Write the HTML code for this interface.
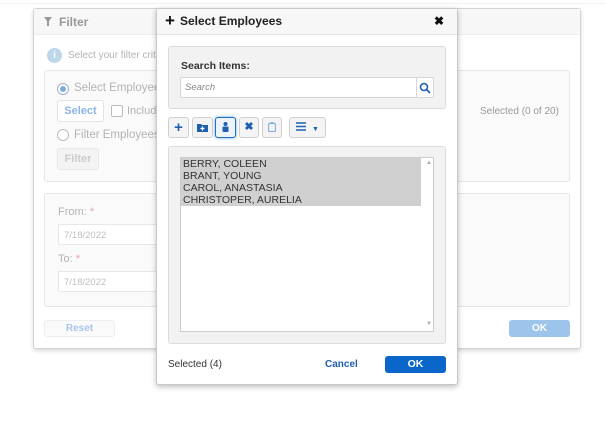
<!DOCTYPE html>
<html><head><style>
*{box-sizing:border-box;margin:0;padding:0}
body{width:605px;height:431px;background:#fff;font-family:"Liberation Sans",sans-serif;position:relative;overflow:hidden;font-size:11px}
.abs{position:absolute}
.back{left:33px;top:8px;width:548px;height:341px;border:1px solid #d4d4d4;border-radius:3px;background:#fff;box-shadow:0 2px 4px rgba(0,0,0,.15)}
.bhead{left:0;top:0;width:100%;height:26px;background:#f7f7f7;border-bottom:1px solid #eee;color:#999;font-weight:bold;font-size:12px}
.panel{border:1px solid #e6e6e6;border-radius:3px;background:#fafafa}
.g{color:#b3b3b3}
.front{left:156px;top:8px;width:302px;height:377px;border:1px solid #c8c8c8;border-radius:3px;background:#fff;box-shadow:0 2px 6px rgba(0,0,0,.25)}
.fp{border:1px solid #dcdcdc;border-radius:3px;background:#f2f2f2}
.tb{top:108px;height:21px;border:1px solid #d0d0d0;border-radius:3px;background:#f4f4f4;color:#1f5fb0;font-weight:bold;text-align:center;line-height:19px;font-size:12px}
.it{left:0;width:240px;height:12px;background:#d0d0d0;color:#333;font-size:10.5px;line-height:12px;padding-left:2px}
</style></head><body>
<div class="abs" style="left:0;top:3px;width:605px;height:1px;background:#f0f0f0"></div>
<div class="abs back">
 <div class="abs bhead"><svg class="abs" style="left:10px;top:8px" width="8" height="9" viewBox="0 0 8 9"><path d="M0 0h8L5 4v5H3V4z" fill="#999"/></svg><span class="abs" style="left:25px;top:6px">Filter</span></div>
 <div class="abs" style="left:13px;top:39px;width:15px;height:15px;border-radius:50%;background:#bcd6ea;color:#fff;font-size:10px;text-align:center;line-height:15px;font-weight:bold">i</div>
 <div class="abs g" style="left:34px;top:41px;font-size:10px">Select your filter criteria</div>
 <div class="abs panel" style="left:10px;top:61px;width:526px;height:112px"></div>
 <div class="abs" style="left:23px;top:74px;width:12px;height:12px;border-radius:50%;border:1px solid #aac;background:#fff"><div style="margin:2px;width:6px;height:6px;border-radius:50%;background:#7aaee0"></div></div>
 <div class="abs g" style="left:40px;top:73px;font-size:11.5px">Select Employees</div>
 <div class="abs" style="left:23px;top:91px;width:47px;height:22px;border:1px solid #e4e4e4;border-radius:3px;background:#fff;color:#8ab4e4;font-weight:bold;text-align:center;line-height:20px">Select</div>
 <div class="abs" style="left:77px;top:96px;width:12px;height:12px;border:1px solid #bbb;border-radius:2px;background:#fff"></div>
 <div class="abs g" style="left:93px;top:96px;font-size:11px">Include</div>
 <div class="abs" style="left:23px;top:120px;width:12px;height:12px;border-radius:50%;border:1px solid #bbb;background:#fff"></div>
 <div class="abs g" style="left:40px;top:120px;font-size:11.5px">Filter Employees</div>
 <div class="abs" style="left:23px;top:139px;width:42px;height:22px;border:1px solid #e8e8e8;border-radius:3px;background:#f4f4f4;color:#ccc;font-weight:bold;text-align:center;line-height:20px">Filter</div>
 <div class="abs" style="left:446px;top:97px;color:#999;font-size:10px">Selected (0 of 20)</div>
 <div class="abs panel" style="left:10px;top:184px;width:526px;height:114px"></div>
 <div class="abs g" style="left:24px;top:197px;font-size:11px">From: <span style="color:#f0a0a0">*</span></div>
 <div class="abs" style="left:24px;top:215px;width:110px;height:21px;border:1px solid #e8e8e8;background:#fff;color:#c0c0c0;font-size:9.5px;padding:5px 0 0 5px">7/18/2022</div>
 <div class="abs g" style="left:24px;top:244px;font-size:11px">To: <span style="color:#f0a0a0">*</span></div>
 <div class="abs" style="left:24px;top:262px;width:110px;height:21px;border:1px solid #e8e8e8;background:#fff;color:#c0c0c0;font-size:9.5px;padding:5px 0 0 5px">7/18/2022</div>
 <div class="abs" style="left:10px;top:311px;width:71px;height:17px;border:1px solid #eee;border-radius:3px;background:#fafafa;color:#a8c6ea;font-weight:bold;text-align:center;line-height:15px;font-size:10px">Reset</div>
 <div class="abs" style="left:475px;top:311px;width:61px;height:17px;border-radius:3px;background:#9dc4eb;color:#fff;font-weight:bold;text-align:center;line-height:17px;font-size:10px">OK</div>
</div>
<div class="abs front">
 <div class="abs" style="left:0;top:0;width:100%;height:26px;background:#f7f7f7;border-bottom:1px solid #e4e4e4"></div>
 <div class="abs" style="left:8px;top:2px;font-size:17px;font-weight:bold;color:#111">+</div>
 <div class="abs" style="left:23px;top:5px;font-size:12px;font-weight:bold;color:#222">Select Employees</div>
 <div class="abs" style="left:277px;top:5px;font-size:12px;font-weight:bold;color:#111">&#10006;</div>
 <div class="abs fp" style="left:11px;top:37px;width:278px;height:63px"></div>
 <div class="abs" style="left:24px;top:51px;font-size:10.5px;font-weight:bold;color:#333">Search Items:</div>
 <div class="abs" style="left:23px;top:68px;width:254px;height:21px;border:1px solid #d6d6d6;border-radius:2px;background:#fff"></div>
 <div class="abs" style="left:28px;top:73px;font-size:9.5px;font-style:italic;color:#888">Search</div>
 <div class="abs" style="left:259px;top:69px;width:1px;height:19px;background:#d6d6d6"></div>
 <svg class="abs" style="left:262px;top:73px" width="12" height="12" viewBox="0 0 12 12"><circle cx="5" cy="5" r="3.5" fill="none" stroke="#1f5fb0" stroke-width="1.6"/><path d="M7.5 7.5L11 11" stroke="#1f5fb0" stroke-width="1.8"/></svg>
 <div class="abs tb" style="left:11px;width:21px;font-size:15px">+</div>
 <div class="abs tb" style="left:35px;width:21px"><svg width="11" height="9" viewBox="0 0 11 9" style="margin-top:5px"><path d="M0 1h4l1 1h6v7H0z" fill="#1f5fb0"/><path d="M5.5 3.5v4M3.5 5.5h4" stroke="#fff" stroke-width="1.3"/></svg></div>
 <div class="abs tb" style="left:58px;width:21px;border:1px solid #1f6fc0;box-shadow:0 0 3px #6aa8e8;background:#eef3fa"><svg width="7" height="10" viewBox="0 0 7 10" style="margin-top:4px"><circle cx="3.5" cy="2" r="2" fill="#1f5fb0"/><rect x="0.5" y="4.5" width="6" height="5.5" rx="1" fill="#1f5fb0"/></svg></div>
 <div class="abs tb" style="left:82px;width:20px;font-size:11px">&#10006;</div>
 <div class="abs tb" style="left:105px;width:20px"><svg width="8" height="10" viewBox="0 0 8 10" style="margin-top:4px"><rect x="0.5" y="1.5" width="7" height="8" rx="1" fill="none" stroke="#8ab0dd" stroke-width="1.2"/><rect x="2.5" y="0" width="3" height="2" fill="#8ab0dd"/></svg></div>
 <div class="abs tb" style="left:132px;width:37px;text-align:left;padding-left:6px"><svg width="10" height="9" viewBox="0 0 10 9"><path d="M0 1h10M0 4.5h10M0 8h10" stroke="#1f5fb0" stroke-width="1.6"/></svg><span style="font-size:7px;margin-left:6px">&#9660;</span></div>
 <div class="abs fp" style="left:11px;top:137px;width:278px;height:198px"></div>
 <div class="abs" style="left:23px;top:148px;width:254px;height:175px;border:1px solid #ccc;background:#fff">
  <div class="abs it" style="top:0">BERRY, COLEEN</div>
  <div class="abs it" style="top:12px">BRANT, YOUNG</div>
  <div class="abs it" style="top:24px">CAROL, ANASTASIA</div>
  <div class="abs it" style="top:36px">CHRISTOPER, AURELIA</div>
  <div class="abs" style="left:245px;top:2px;font-size:6px;color:#aaa">&#9650;</div>
  <div class="abs" style="left:245px;top:163px;font-size:6px;color:#aaa">&#9660;</div>
 </div>
 <div class="abs" style="left:11px;top:350px;font-size:10px;color:#333">Selected (4)</div>
 <div class="abs" style="left:168px;top:350px;font-size:10px;font-weight:bold;color:#1f5fb0">Cancel</div>
 <div class="abs" style="left:228px;top:347px;width:61px;height:17px;border-radius:3px;background:#0a66c8;color:#fff;font-weight:bold;text-align:center;line-height:17px;font-size:10.5px">OK</div>
</div>
</body></html>
